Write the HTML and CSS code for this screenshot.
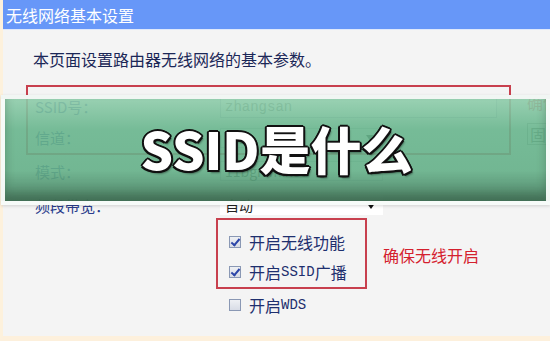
FILE: index.html
```html
<!DOCTYPE html>
<html lang="zh-CN">
<head>
  <meta charset="UTF-8">
  <title>SSID是什么</title>
  <link rel="stylesheet" href="styles.css">
</head>
<body>
  <div class="page">
    <header class="titlebar">无线网络基本设置</header>

    <main class="content">
      <p class="intro">本页面设置路由器无线网络的基本参数。</p>

      <div class="ssid-wrap">
        <div class="group group-ssid">
          <div class="row">
            <span class="label">SSID号：</span>
            <span class="input">zhangsan</span>
          </div>
          <div class="row">
            <span class="label">信道：</span>
            <span class="select">自动<i class="arrow"></i></span>
          </div>
        </div>
        <div class="notes">
          <span>确保无线名称</span>
          <span class="boxed">固定信道</span>
        </div>
      </div>

      <div class="row row-out">
        <span class="label">模式：</span>
        <span class="select">11bgn mixed<i class="arrow"></i></span>
      </div>
      <div class="row row-out row-band">
        <span class="label">频段带宽：</span>
        <span class="select select-white">自动<i class="arrow"></i></span>
      </div>

      <div class="switches">
        <div class="group group-check">
          <label class="check-row"><span class="check on"></span>开启无线功能</label>
          <label class="check-row"><span class="check on"></span>开启<span class="mono">SSID</span>广播</label>
        </div>
        <p class="warn">确保无线开启</p>
      </div>
      <label class="check-row check-out"><span class="check"></span>开启<span class="mono">WDS</span></label>
    </main>

    <!-- title banner laid over the screenshot -->
    <div class="banner"><span>SSID是什么</span></div>
  </div>
</body>
</html>
```

FILE: styles.css
```css
:root{
  --bar:#6797f8;
  --bg:#f4f4f4;
  --navy:#1e2d66;
  --red:#c8404e;
}
*{box-sizing:border-box;margin:0;padding:0;}
body{
  width:550px;height:341px;overflow:hidden;
  font-family:'Noto Sans CJK SC','Noto Sans',sans-serif;
  background:var(--bg);
  color:var(--navy);
}
.page{position:relative;width:550px;height:341px;border-left:3px solid #fdf1dc;border-bottom:5px solid #fdf0dc;}

.titlebar{height:30px;background:var(--bar);color:#fff;font-size:16px;line-height:30px;padding-left:3px;border-bottom:1px solid #dfe8fb;}

.content{padding-left:23px;}
.intro{font-size:16px;line-height:20px;margin:19px 0 0 7px;color:#1b2757;}

.ssid-wrap{display:flex;margin-top:16px;white-space:nowrap;}
.group{border:2px solid var(--red);}
.group-ssid{width:485px;flex:none;padding:4px 0 0 7px;}
.notes{display:flex;flex-direction:column;margin-left:16px;color:#d42a3a;font-size:16px;line-height:31px;padding-top:2px;}
.notes .boxed{color:#555;border:1px solid #999;line-height:20px;padding:0 2px;margin-top:5px;}

.row{display:flex;align-items:center;height:31px;font-size:15px;color:#2a3c8c;}
.row-out{height:32px;padding-left:9px;}
.row-band{height:26px;margin-top:5px;}
.label{width:185px;flex:none;}

.input{width:277px;height:22px;border:1px solid #b8bcc8;background:#fff;font-family:'Liberation Mono',monospace;font-size:14px;line-height:20px;padding-left:4px;color:#666;}
.select{position:relative;width:163px;height:20px;border:1px solid #c4c8d0;background:#fff;font-size:14px;line-height:18px;padding-left:4px;color:#222;}
.select-white{border-color:#fff;}
.arrow{position:absolute;right:6px;top:6px;border:5px solid transparent;border-top:7px solid #111;border-bottom:0;}

.switches{display:flex;align-items:center;margin-left:190px;}
.group-check{width:151px;height:71px;padding:7px 0 0 11px;}
.check-row{display:flex;align-items:center;height:30px;font-size:16px;color:#1e2f6e;}
.check{width:12px;height:12px;margin-right:8px;border:1px solid #8a98b4;background:linear-gradient(#eef0f4,#d8dce6);position:relative;}
.check.on::after{content:'';position:absolute;left:3px;top:0;width:3px;height:7px;border:solid #2b45a8;border-width:0 2px 2px 0;transform:rotate(40deg);}
.mono{font-family:'Liberation Mono',monospace;font-size:14px;}
.warn{margin-left:16px;color:#d4202e;font-size:16px;margin-top:2px;}
.check-out{height:32px;margin-left:203px;}

.banner{
  position:absolute;left:-2px;top:95px;width:549px;height:110px;
  border:4px solid rgba(255,255,255,.92);
  background:linear-gradient(rgba(142,204,170,.9),rgba(104,181,141,.9) 30%,rgba(100,176,136,.9) 70%,rgba(72,128,98,.95));
  box-shadow:inset 0 -8px 10px rgba(40,70,50,.35),0 1px 3px rgba(0,0,0,.15);
  display:flex;justify-content:center;align-items:center;
}
.banner span{
  font-size:51px;font-weight:900;color:#fff;margin:-4px 0 0 2px;
  text-shadow:2px 0 #111,-2px 0 #111,0 2px #111,0 -2px #111,1.5px 1.5px #111,-1.5px 1.5px #111,1.5px -1.5px #111,-1.5px -1.5px #111,2px 3px 2px rgba(0,0,0,.4);
}
```
